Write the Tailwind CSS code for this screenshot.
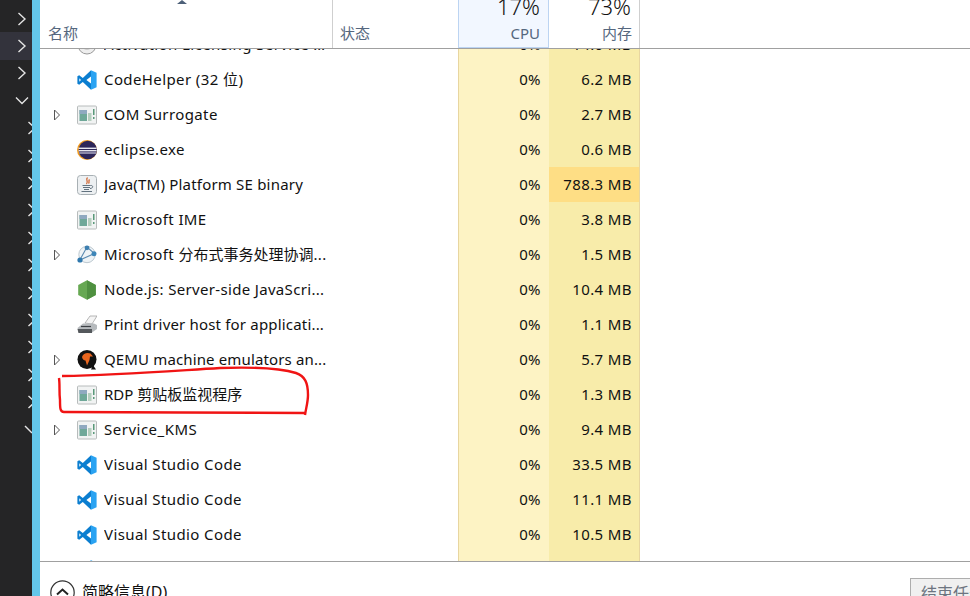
<!DOCTYPE html>
<html lang="zh-CN">
<head>
<meta charset="UTF-8">
<title>任务管理器</title>
<script src="https://cdn.jsdelivr.net/npm/@tailwindcss/browser@4"></script>
</head>
<body class="w-[970px] h-[596px] overflow-hidden bg-white relative flex [font-family:'Noto_Sans','Noto_Sans_CJK_SC',sans-serif] text-[15px] tracking-[0.4px] text-[#111]">
<!-- icon defs -->
<svg class="hidden">
  <symbol id="chev" viewBox="0 0 12 16"><path d="M2.5 2 L9 8 L2.5 14" fill="none" stroke="#e4e4e4" stroke-width="1.4"/></symbol>
  <symbol id="tri" viewBox="0 0 8 12"><path d="M1.5 1 L6.5 6 L1.5 11 Z" fill="#fff" stroke="#555" stroke-width="1"/></symbol>
  <symbol id="vscode" viewBox="0 0 20 20">
    <path d="M14 0.2 L19.6 2.8 V17.2 L14 19.8 L14 13.6 V6.4 Z" fill="#2aa3f2"/>
    <path d="M14 0.2 L5.8 8 L2.2 5.2 L0.4 6.2 V13.8 L2.2 14.8 L5.8 12 L14 19.8 V13.6 L9.4 10 L14 6.4 Z" fill="#0b7ed0"/>
    <path d="M2.3 8.2 L4 10 L2.3 11.8 Z" fill="#fff"/>
  </symbol>
  <symbol id="app" viewBox="0 0 20 20">
    <rect x="0.5" y="1" width="19" height="18" rx="1" fill="#f1f3f3" stroke="#b8bcbc"/>
    <rect x="2.5" y="5" width="7.5" height="11" fill="#6fa899"/>
    <rect x="2.5" y="5" width="7.5" height="4" fill="#8fa9c0"/>
    <rect x="11" y="8" width="3.5" height="8" fill="#b6cfbf"/>
    <rect x="16" y="4" width="1.5" height="6" fill="#5a9a7a"/>
    <rect x="16" y="12" width="1.5" height="2" fill="#5a9a7a"/>
  </symbol>
  <symbol id="eclipse" viewBox="0 0 20 20">
    <circle cx="10" cy="10" r="10" fill="#f09a1e"/>
    <circle cx="10.8" cy="10" r="9.2" fill="#2c2559"/>
    <rect x="1.6" y="7.6" width="18" height="1.4" fill="#e6e6ef"/>
    <rect x="1.6" y="10" width="18" height="1.4" fill="#e6e6ef"/>
    <rect x="2.2" y="12.4" width="17" height="1.2" fill="#c9c9dc"/>
  </symbol>
  <symbol id="java" viewBox="0 0 20 20">
    <rect x="0.5" y="0.5" width="19" height="19" rx="3" fill="#edf0f2" stroke="#a8b0b4"/>
    <path d="M10.5 2.5 C8 5 12 6 9.5 9 M12.5 4.5 C11 6 13 7 11.5 8.5" fill="none" stroke="#d0602a" stroke-width="1.2"/>
    <path d="M5.5 10.5 H13.5 M6 12.5 H13 M7 14.5 H12 M4.5 16.5 H15" stroke="#62727f" stroke-width="1.1"/>
    <path d="M13.5 10.5 C16.5 10 16.5 13.5 13 13.5" fill="none" stroke="#62727f"/>
  </symbol>
  <symbol id="net" viewBox="0 0 20 20">
    <circle cx="10" cy="9.5" r="8.2" fill="#eef3f6" stroke="#bcc8d0"/>
    <path d="M10 2 L2.8 15 L17.5 8.5 Z" fill="none" stroke="#5a8ab0" stroke-width="1.1"/>
    <circle cx="10" cy="2.8" r="2.4" fill="#3d7fb0"/>
    <circle cx="3" cy="15" r="2.6" fill="#2f78ad"/>
    <circle cx="17" cy="8.8" r="2.5" fill="#3d86b8"/>
  </symbol>
  <symbol id="node" viewBox="0 0 20 20">
    <path d="M10 0.2 L18.8 5 V15 L10 19.8 L1.2 15 V5 Z" fill="#66a852"/>
    <path d="M10 0.2 L18.8 5 V15 L10 19.8 Z" fill="#4f9040"/>
  </symbol>
  <symbol id="printer" viewBox="0 0 20 20">
    <path d="M8 8 L13 1 L20 1 L15 9 Z" fill="#f4f4f4" stroke="#9a9a9a" stroke-width="0.7"/>
    <path d="M0.5 13 L6 8.5 H17 L20 10 V14 L15 17.5 H1.5 Z" fill="#b6babd"/>
    <path d="M0.5 14 H15 V18 H1.5 Z" fill="#54585c"/>
    <path d="M4 11.5 H14" stroke="#3d4145" stroke-width="1.2"/>
  </symbol>
  <symbol id="qemu" viewBox="0 0 20 20">
    <circle cx="10" cy="9.5" r="9.5" fill="#121212"/>
    <path d="M14 19.5 L19 19.5 L16 15 Z" fill="#121212"/>
    <path d="M5 7 C6 3.5 10 2 13.5 3.5 L16 6.5 L13 6.5 L12.5 10 L10 15.5 L8.5 10.5 C6.5 10.5 5.5 9 5 7 Z" fill="#e9661f"/>
  </symbol>
  <symbol id="gear" viewBox="0 0 20 20">
    <circle cx="10" cy="10" r="9" fill="#eee" stroke="#999"/>
    <circle cx="10" cy="10" r="5" fill="#ccc"/>
  </symbol>
</svg>

<!-- dark side strip -->
<aside class="w-8 h-full bg-[#252526] shrink-0 flex flex-col pt-[5px] overflow-hidden">
  <div class="h-[27.4px] shrink-0 flex items-center pl-[16px]"><svg class="w-3 h-4"><use href="#chev"/></svg></div>
  <div class="h-[27.4px] shrink-0 flex items-center pl-[16px] bg-[#33333c]"><svg class="w-3 h-4"><use href="#chev"/></svg></div>
  <div class="h-[27.4px] shrink-0 flex items-center pl-[16px]"><svg class="w-3 h-4"><use href="#chev"/></svg></div>
  <div class="h-[27.4px] shrink-0 flex items-center pl-[14px]"><svg class="w-4 h-3" viewBox="0 0 16 12"><path d="M2 2.5 L8 8.5 L14 2.5" fill="none" stroke="#e4e4e4" stroke-width="1.4"/></svg></div>
  <div class="h-[27.4px] shrink-0 flex items-center pl-[26px]"><svg class="w-3 h-4 shrink-0"><use href="#chev"/></svg></div>
  <div class="h-[27.4px] shrink-0 flex items-center pl-[26px]"><svg class="w-3 h-4 shrink-0"><use href="#chev"/></svg></div>
  <div class="h-[27.4px] shrink-0 flex items-center pl-[26px]"><svg class="w-3 h-4 shrink-0"><use href="#chev"/></svg></div>
  <div class="h-[27.4px] shrink-0 flex items-center pl-[26px]"><svg class="w-3 h-4 shrink-0"><use href="#chev"/></svg></div>
  <div class="h-[27.4px] shrink-0 flex items-center pl-[26px]"><svg class="w-3 h-4 shrink-0"><use href="#chev"/></svg></div>
  <div class="h-[27.4px] shrink-0 flex items-center pl-[26px]"><svg class="w-3 h-4 shrink-0"><use href="#chev"/></svg></div>
  <div class="h-[27.4px] shrink-0 flex items-center pl-[26px]"><svg class="w-3 h-4 shrink-0"><use href="#chev"/></svg></div>
  <div class="h-[27.4px] shrink-0 flex items-center pl-[26px]"><svg class="w-3 h-4 shrink-0"><use href="#chev"/></svg></div>
  <div class="h-[27.4px] shrink-0 flex items-center pl-[26px]"><svg class="w-3 h-4 shrink-0"><use href="#chev"/></svg></div>
  <div class="h-[27.4px] shrink-0 flex items-center pl-[26px]"><svg class="w-3 h-4 shrink-0"><use href="#chev"/></svg></div>
  <div class="h-[27.4px] shrink-0 flex items-center pl-[26px]"><svg class="w-3 h-4 shrink-0"><use href="#chev"/></svg></div>
  <div class="h-[27.4px] shrink-0 flex items-center pl-[24px]"><svg class="w-2 h-3" viewBox="0 0 8 12"><path d="M1 2 L8 9" fill="none" stroke="#e4e4e4" stroke-width="1.4"/></svg></div>
</aside>
<div class="w-2 h-full bg-[#64c7ea] shrink-0"></div>

<main class="flex-1 flex flex-col h-full min-w-0">
  <!-- column headers -->
  <header class="h-[49px] shrink-0 flex border-b border-[#a0a0a0] text-[#55677e] tracking-normal">
    <div class="w-[293px] shrink-0 border-r border-[#cfcfcf] relative pl-2 pt-[22px]">
      <svg class="absolute left-[136px] top-0 w-3 h-1" viewBox="0 0 12 4"><path d="M1 4 L6 0 L11 4 Z" fill="#4d6078"/></svg>
      名称
    </div>
    <div class="w-[125px] shrink-0 pl-[7px] pt-[22px]">状态</div>
    <div class="w-[91px] shrink-0 bg-[#f2f7ff] border-x border-b border-[#bcd4f2] text-right pr-2 relative">
      <div class="absolute right-2 -top-[4px] text-[22px] font-light text-[#111] leading-[20px]">17%</div>
      <div class="pt-[22px]">CPU</div>
    </div>
    <div class="w-[91px] shrink-0 border-r border-[#cfcfcf] text-right pr-[7px] relative">
      <div class="absolute right-2 -top-[4px] text-[22px] font-light text-[#111] leading-[20px]">73%</div>
      <div class="pt-[22px]">内存</div>
    </div>
  </header>

  <!-- process rows -->
  <section class="h-[513px] shrink-0 overflow-hidden border-b border-[#a0a0a0]">
    <div class="-mt-[22px]">
      <div class="h-[35px] flex items-center">
        <div class="w-[293px] shrink-0 flex items-center pl-[37px]"><svg class="w-5 h-5 mr-[7px]"><use href="#gear"/></svg><span class="truncate w-[225px]">Activation Licensing Service (...</span></div>
        <div class="w-[125px] shrink-0"></div>
        <div class="w-[91px] h-full shrink-0 bg-[#fdf3c4] border-l border-[#e8d6a0] flex items-center justify-end pr-2">0%</div>
        <div class="w-[91px] h-full shrink-0 bg-[#f8ecaa] border-r border-[#e8d6a0] flex items-center justify-end pr-[7px]">14.0 MB</div>
      </div>
      <div class="h-[35px] flex items-center">
        <div class="w-[293px] shrink-0 flex items-center pl-[37px]"><svg class="w-5 h-5 mr-[7px]"><use href="#vscode"/></svg><span class="truncate w-[225px]">CodeHelper (32 位)</span></div>
        <div class="w-[125px] shrink-0"></div>
        <div class="w-[91px] h-full shrink-0 bg-[#fdf3c4] border-l border-[#e8d6a0] flex items-center justify-end pr-2">0%</div>
        <div class="w-[91px] h-full shrink-0 bg-[#f8ecaa] border-r border-[#e8d6a0] flex items-center justify-end pr-[7px]">6.2 MB</div>
      </div>
      <div class="h-[35px] flex items-center">
        <div class="w-[293px] shrink-0 flex items-center pl-[13px]"><svg class="w-2 h-3 mr-4"><use href="#tri"/></svg><svg class="w-5 h-5 mr-[7px]"><use href="#app"/></svg><span class="truncate w-[225px]">COM Surrogate</span></div>
        <div class="w-[125px] shrink-0"></div>
        <div class="w-[91px] h-full shrink-0 bg-[#fdf3c4] border-l border-[#e8d6a0] flex items-center justify-end pr-2">0%</div>
        <div class="w-[91px] h-full shrink-0 bg-[#f8ecaa] border-r border-[#e8d6a0] flex items-center justify-end pr-[7px]">2.7 MB</div>
      </div>
      <div class="h-[35px] flex items-center">
        <div class="w-[293px] shrink-0 flex items-center pl-[37px]"><svg class="w-5 h-5 mr-[7px]"><use href="#eclipse"/></svg><span class="truncate w-[225px]">eclipse.exe</span></div>
        <div class="w-[125px] shrink-0"></div>
        <div class="w-[91px] h-full shrink-0 bg-[#fdf3c4] border-l border-[#e8d6a0] flex items-center justify-end pr-2">0%</div>
        <div class="w-[91px] h-full shrink-0 bg-[#f8ecaa] border-r border-[#e8d6a0] flex items-center justify-end pr-[7px]">0.6 MB</div>
      </div>
      <div class="h-[35px] flex items-center">
        <div class="w-[293px] shrink-0 flex items-center pl-[37px]"><svg class="w-5 h-5 mr-[7px]"><use href="#java"/></svg><span class="truncate w-[225px] tracking-[0.2px]">Java(TM) Platform SE binary</span></div>
        <div class="w-[125px] shrink-0"></div>
        <div class="w-[91px] h-full shrink-0 bg-[#fdf3c4] border-l border-[#e8d6a0] flex items-center justify-end pr-2">0%</div>
        <div class="w-[91px] h-full shrink-0 bg-[#fede85] border-r border-[#e8d6a0] flex items-center justify-end pr-[7px]">788.3 MB</div>
      </div>
      <div class="h-[35px] flex items-center">
        <div class="w-[293px] shrink-0 flex items-center pl-[37px]"><svg class="w-5 h-5 mr-[7px]"><use href="#app"/></svg><span class="truncate w-[225px]">Microsoft IME</span></div>
        <div class="w-[125px] shrink-0"></div>
        <div class="w-[91px] h-full shrink-0 bg-[#fdf3c4] border-l border-[#e8d6a0] flex items-center justify-end pr-2">0%</div>
        <div class="w-[91px] h-full shrink-0 bg-[#f8ecaa] border-r border-[#e8d6a0] flex items-center justify-end pr-[7px]">3.8 MB</div>
      </div>
      <div class="h-[35px] flex items-center">
        <div class="w-[293px] shrink-0 flex items-center pl-[13px]"><svg class="w-2 h-3 mr-4"><use href="#tri"/></svg><svg class="w-5 h-5 mr-[7px]"><use href="#net"/></svg><span class="whitespace-nowrap w-[225px]">Microsoft <span class="tracking-normal">分布式事务处理协调</span>...</span></div>
        <div class="w-[125px] shrink-0"></div>
        <div class="w-[91px] h-full shrink-0 bg-[#fdf3c4] border-l border-[#e8d6a0] flex items-center justify-end pr-2">0%</div>
        <div class="w-[91px] h-full shrink-0 bg-[#f8ecaa] border-r border-[#e8d6a0] flex items-center justify-end pr-[7px]">1.5 MB</div>
      </div>
      <div class="h-[35px] flex items-center">
        <div class="w-[293px] shrink-0 flex items-center pl-[37px]"><svg class="w-5 h-5 mr-[7px]"><use href="#node"/></svg><span class="whitespace-nowrap w-[225px] tracking-[0.33px]">Node.js: Server-side JavaScri...</span></div>
        <div class="w-[125px] shrink-0"></div>
        <div class="w-[91px] h-full shrink-0 bg-[#fdf3c4] border-l border-[#e8d6a0] flex items-center justify-end pr-2">0%</div>
        <div class="w-[91px] h-full shrink-0 bg-[#f8ecaa] border-r border-[#e8d6a0] flex items-center justify-end pr-[7px]">10.4 MB</div>
      </div>
      <div class="h-[35px] flex items-center">
        <div class="w-[293px] shrink-0 flex items-center pl-[37px]"><svg class="w-5 h-5 mr-[7px]"><use href="#printer"/></svg><span class="whitespace-nowrap w-[225px] tracking-[0.18px]">Print driver host for applicati...</span></div>
        <div class="w-[125px] shrink-0"></div>
        <div class="w-[91px] h-full shrink-0 bg-[#fdf3c4] border-l border-[#e8d6a0] flex items-center justify-end pr-2">0%</div>
        <div class="w-[91px] h-full shrink-0 bg-[#f8ecaa] border-r border-[#e8d6a0] flex items-center justify-end pr-[7px]">1.1 MB</div>
      </div>
      <div class="h-[35px] flex items-center">
        <div class="w-[293px] shrink-0 flex items-center pl-[13px]"><svg class="w-2 h-3 mr-4"><use href="#tri"/></svg><svg class="w-5 h-5 mr-[7px]"><use href="#qemu"/></svg><span class="whitespace-nowrap w-[225px] tracking-[0.14px]">QEMU machine emulators an...</span></div>
        <div class="w-[125px] shrink-0"></div>
        <div class="w-[91px] h-full shrink-0 bg-[#fdf3c4] border-l border-[#e8d6a0] flex items-center justify-end pr-2">0%</div>
        <div class="w-[91px] h-full shrink-0 bg-[#f8ecaa] border-r border-[#e8d6a0] flex items-center justify-end pr-[7px]">5.7 MB</div>
      </div>
      <div class="h-[35px] flex items-center">
        <div class="w-[293px] shrink-0 flex items-center pl-[37px]"><svg class="w-5 h-5 mr-[7px]"><use href="#app"/></svg><span class="truncate w-[225px] tracking-normal">RDP 剪贴板监视程序</span></div>
        <div class="w-[125px] shrink-0"></div>
        <div class="w-[91px] h-full shrink-0 bg-[#fdf3c4] border-l border-[#e8d6a0] flex items-center justify-end pr-2">0%</div>
        <div class="w-[91px] h-full shrink-0 bg-[#f8ecaa] border-r border-[#e8d6a0] flex items-center justify-end pr-[7px]">1.3 MB</div>
      </div>
      <div class="h-[35px] flex items-center">
        <div class="w-[293px] shrink-0 flex items-center pl-[13px]"><svg class="w-2 h-3 mr-4"><use href="#tri"/></svg><svg class="w-5 h-5 mr-[7px]"><use href="#app"/></svg><span class="truncate w-[225px] tracking-[0.5px]">Service_KMS</span></div>
        <div class="w-[125px] shrink-0"></div>
        <div class="w-[91px] h-full shrink-0 bg-[#fdf3c4] border-l border-[#e8d6a0] flex items-center justify-end pr-2">0%</div>
        <div class="w-[91px] h-full shrink-0 bg-[#f8ecaa] border-r border-[#e8d6a0] flex items-center justify-end pr-[7px]">9.4 MB</div>
      </div>
      <div class="h-[35px] flex items-center">
        <div class="w-[293px] shrink-0 flex items-center pl-[37px]"><svg class="w-5 h-5 mr-[7px]"><use href="#vscode"/></svg><span class="truncate w-[225px]">Visual Studio Code</span></div>
        <div class="w-[125px] shrink-0"></div>
        <div class="w-[91px] h-full shrink-0 bg-[#fdf3c4] border-l border-[#e8d6a0] flex items-center justify-end pr-2">0%</div>
        <div class="w-[91px] h-full shrink-0 bg-[#f8ecaa] border-r border-[#e8d6a0] flex items-center justify-end pr-[7px]">33.5 MB</div>
      </div>
      <div class="h-[35px] flex items-center">
        <div class="w-[293px] shrink-0 flex items-center pl-[37px]"><svg class="w-5 h-5 mr-[7px]"><use href="#vscode"/></svg><span class="truncate w-[225px]">Visual Studio Code</span></div>
        <div class="w-[125px] shrink-0"></div>
        <div class="w-[91px] h-full shrink-0 bg-[#fdf3c4] border-l border-[#e8d6a0] flex items-center justify-end pr-2">0%</div>
        <div class="w-[91px] h-full shrink-0 bg-[#f8ecaa] border-r border-[#e8d6a0] flex items-center justify-end pr-[7px]">11.1 MB</div>
      </div>
      <div class="h-[35px] flex items-center">
        <div class="w-[293px] shrink-0 flex items-center pl-[37px]"><svg class="w-5 h-5 mr-[7px]"><use href="#vscode"/></svg><span class="truncate w-[225px]">Visual Studio Code</span></div>
        <div class="w-[125px] shrink-0"></div>
        <div class="w-[91px] h-full shrink-0 bg-[#fdf3c4] border-l border-[#e8d6a0] flex items-center justify-end pr-2">0%</div>
        <div class="w-[91px] h-full shrink-0 bg-[#f8ecaa] border-r border-[#e8d6a0] flex items-center justify-end pr-[7px]">10.5 MB</div>
      </div>
      <div class="h-[35px] flex items-center">
        <div class="w-[293px] shrink-0 flex items-center pl-[37px]"><svg class="w-5 h-5 mr-[7px]"><use href="#vscode"/></svg><span class="truncate w-[225px]">Visual Studio Code</span></div>
        <div class="w-[125px] shrink-0"></div>
        <div class="w-[91px] h-full shrink-0 bg-[#fdf3c4] border-l border-[#e8d6a0] flex items-center justify-end pr-2">0%</div>
        <div class="w-[91px] h-full shrink-0 bg-[#f8ecaa] border-r border-[#e8d6a0] flex items-center justify-end pr-[7px]">9.8 MB</div>
      </div>
    </div>
  </section>

  <!-- footer -->
  <footer class="flex-1 flex items-start relative pl-[10px] pt-[18px] overflow-hidden tracking-normal">
    <svg class="w-[25px] h-[25px] mr-[7px] shrink-0" viewBox="0 0 25 25"><circle cx="12.5" cy="12.5" r="11.7" fill="#fff" stroke="#333" stroke-width="1.2"/><path d="M7 14.5 L12.5 9.5 L18 14.5" fill="none" stroke="#222" stroke-width="2"/></svg>
    <span class="text-[16px] whitespace-nowrap">简略信息(D)</span>
    <div class="absolute left-[870px] top-[16px] w-[90px] h-[30px] bg-[#f0f0f0] border border-[#adadad] text-[16px] text-[#6d7480] pl-[10px] pt-[2px] whitespace-nowrap">结束任务(E)</div>
  </footer>
</main>

<!-- red hand-drawn mark -->
<svg class="absolute left-0 top-0 w-[970px] h-[596px] pointer-events-none" viewBox="0 0 970 596" fill="none">
  <path d="M62 376 C120 375 170 371 220 368 C250 367 280 368 296 373 C305 376 308 383 308 395 C308 402 306 408 305 415 M305 413 C230 413 140 412 64 412 C60 412 60 408 60 400 C59 392 60 385 59 378" stroke="#f01414" stroke-width="2.4"/>
</svg>
</body>
</html>
